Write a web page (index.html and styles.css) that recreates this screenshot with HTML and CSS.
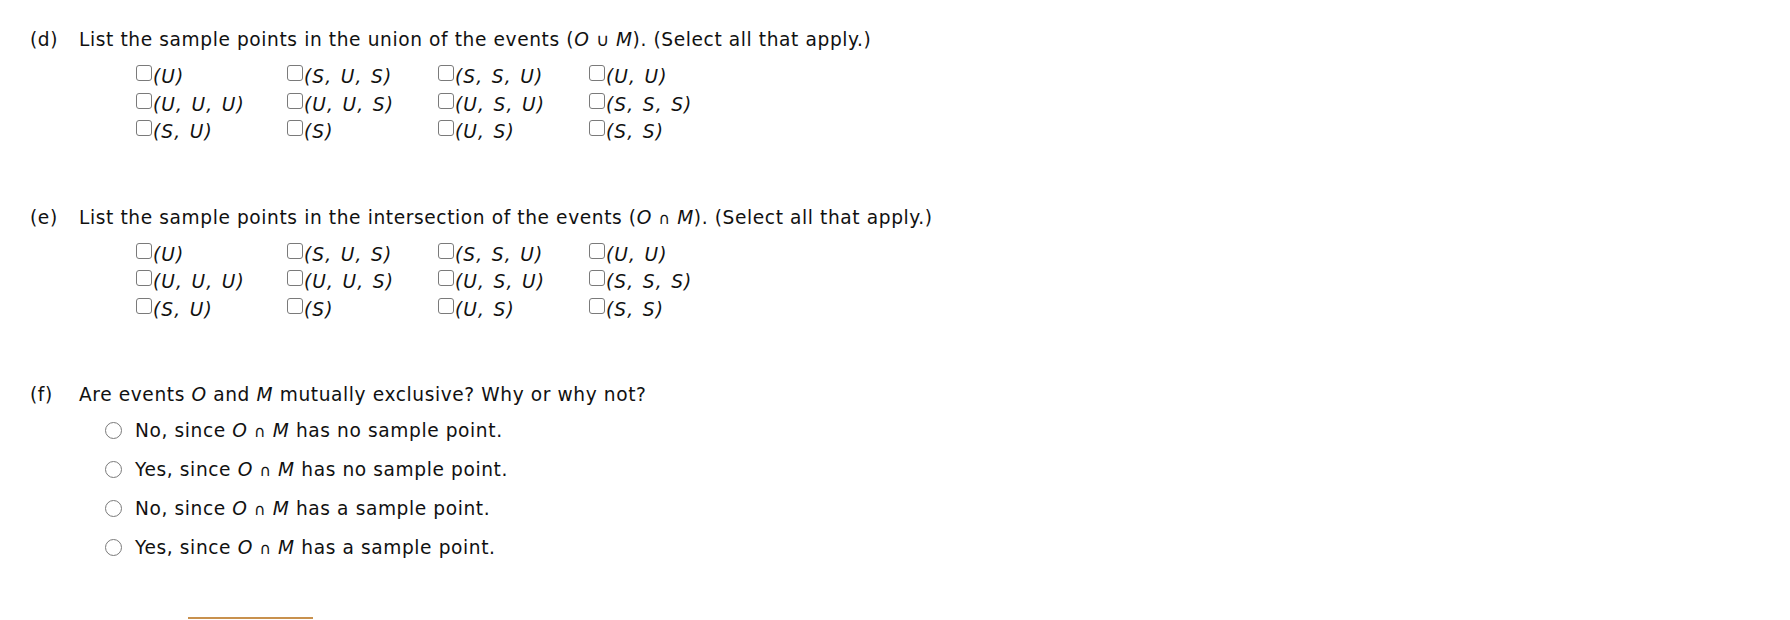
FILE: index.html
```html
<!DOCTYPE html>
<html lang="en">
<head>
<meta charset="utf-8">
<title>Sample points</title>
<link rel="stylesheet" href="styles.css">
</head>
<body>
<div class="page">
  <section class="part part-d">
    <div class="label">(d)</div>
    <div class="content">
      <p class="q">List the sample points in the union of the events (<i>O</i> <span class="op-u">∪</span> <i>M</i>). (Select all that apply.)</p>
      <div class="choices">
        <label class="cb"><span class="box"></span><i>(U)</i></label>
        <label class="cb"><span class="box"></span><i>(S, U, S)</i></label>
        <label class="cb"><span class="box"></span><i>(S, S, U)</i></label>
        <label class="cb"><span class="box"></span><i>(U, U)</i></label>
        <label class="cb"><span class="box"></span><i>(U, U, U)</i></label>
        <label class="cb"><span class="box"></span><i>(U, U, S)</i></label>
        <label class="cb"><span class="box"></span><i>(U, S, U)</i></label>
        <label class="cb"><span class="box"></span><i>(S, S, S)</i></label>
        <label class="cb"><span class="box"></span><i>(S, U)</i></label>
        <label class="cb"><span class="box"></span><i>(S)</i></label>
        <label class="cb"><span class="box"></span><i>(U, S)</i></label>
        <label class="cb"><span class="box"></span><i>(S, S)</i></label>
      </div>
    </div>
  </section>

  <section class="part part-e">
    <div class="label">(e)</div>
    <div class="content">
      <p class="q">List the sample points in the intersection of the events (<i>O</i> <span class="op">∩</span> <i>M</i>). (Select all that apply.)</p>
      <div class="choices">
        <label class="cb"><span class="box"></span><i>(U)</i></label>
        <label class="cb"><span class="box"></span><i>(S, U, S)</i></label>
        <label class="cb"><span class="box"></span><i>(S, S, U)</i></label>
        <label class="cb"><span class="box"></span><i>(U, U)</i></label>
        <label class="cb"><span class="box"></span><i>(U, U, U)</i></label>
        <label class="cb"><span class="box"></span><i>(U, U, S)</i></label>
        <label class="cb"><span class="box"></span><i>(U, S, U)</i></label>
        <label class="cb"><span class="box"></span><i>(S, S, S)</i></label>
        <label class="cb"><span class="box"></span><i>(S, U)</i></label>
        <label class="cb"><span class="box"></span><i>(S)</i></label>
        <label class="cb"><span class="box"></span><i>(U, S)</i></label>
        <label class="cb"><span class="box"></span><i>(S, S)</i></label>
      </div>
    </div>
  </section>

  <section class="part part-f">
    <div class="label">(f)</div>
    <div class="content">
      <p class="q">Are events <i>O</i> and <i>M</i> mutually exclusive? Why or why not?</p>
      <div class="radios">
        <label class="rb"><span class="dot"></span><span>No, since <i>O</i> <span class="op">∩</span> <i>M</i> has no sample point.</span></label>
        <label class="rb"><span class="dot"></span><span>Yes, since <i>O</i> <span class="op">∩</span> <i>M</i> has no sample point.</span></label>
        <label class="rb"><span class="dot"></span><span>No, since <i>O</i> <span class="op">∩</span> <i>M</i> has a sample point.</span></label>
        <label class="rb"><span class="dot"></span><span>Yes, since <i>O</i> <span class="op">∩</span> <i>M</i> has a sample point.</span></label>
      </div>
      <div class="btn"></div>
    </div>
  </section>
</div>
</body>
</html>
```

FILE: styles.css
```css
html, body {
  margin: 0;
  padding: 0;
  background: #ffffff;
}

body {
  font-family: "DejaVu Sans", Verdana, sans-serif;
  font-size: 18.6px;
  letter-spacing: 0.6px;
  color: #111111;
  overflow: hidden;
}

.page {
  padding: 26px 0 0 30px;
}

.part {
  display: grid;
  grid-template-columns: 49px auto;
}

.part-d {
  margin-bottom: 58px;
}

.part-e {
  margin-bottom: 57.7px;
}

.label,
.q {
  line-height: 27.4px;
  margin: 0;
  white-space: nowrap;
}

.op {
  font-size: 0.85em;
}

.op-u {
  font-size: 0.95em;
}

.choices {
  margin-top: 9px;
  margin-left: 57px;
  display: grid;
  grid-template-columns: repeat(4, 151px);
  grid-auto-rows: 27.4px;
}

.cb {
  line-height: 27.4px;
  white-space: nowrap;
}

.cb i {
  letter-spacing: 1.1px;
  word-spacing: 1.5px;
}

.box {
  display: inline-block;
  width: 14px;
  height: 14px;
  border: 1px solid #7a7a7a;
  border-radius: 3px;
  vertical-align: 2px;
  margin-right: 1px;
  background: #ffffff;
}

.radios {
  margin-top: 3px;
  margin-left: 26px;
  display: flex;
  flex-direction: column;
}

.rb {
  height: 39px;
  display: flex;
  align-items: center;
  white-space: nowrap;
}

.dot {
  width: 15px;
  height: 15px;
  border: 1px solid #7a7a7a;
  border-radius: 50%;
  margin-right: 13px;
  flex: none;
}

.btn {
  margin-top: 50px;
  margin-left: 109px;
  width: 125px;
  height: 40px;
  border-top: 2px solid #c8914e;
}
```
